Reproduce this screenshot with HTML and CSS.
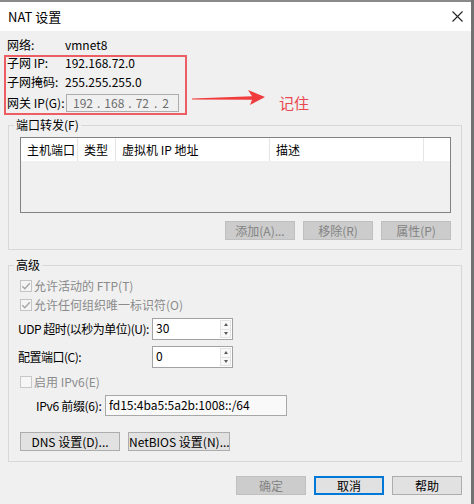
FILE: index.html
```html
<!DOCTYPE html>
<html lang="zh-CN">
<head>
<meta charset="utf-8">
<title>NAT 设置</title>
<link rel="stylesheet" href="styles.css">
</head>
<body>
<div class="window">
  <div class="titlebar">
    <span class="title">NAT 设置</span>
    <svg class="close" viewBox="0 0 11 11" width="11" height="11"><path d="M0.5 0.5 L10.5 10.5 M10.5 0.5 L0.5 10.5" stroke="#222" stroke-width="1.1" fill="none"/></svg>
  </div>

  <div class="content">
    <div class="info">
      <span>网络:</span><span>vmnet8</span>
      <span>子网 IP:</span><span>192.168.72.0</span>
      <span>子网掩码:</span><span>255.255.255.0</span>
      <span>网关 IP(G):</span>
      <div class="ipbox">
        <span>192</span><span class="dot">.</span><span>168</span><span class="dot">.</span><span>72</span><span class="dot wide">.</span><span class="last">2</span>
      </div>
    </div>

    <fieldset class="group">
      <legend>端口转发(F)</legend>
      <div class="ports">
        <div class="list">
          <div class="list-head">
            <span>主机端口</span><span>类型</span><span>虚拟机 IP 地址</span><span>描述</span><span class="blank"></span>
          </div>
        </div>
        <div class="btn-row">
          <span class="btn disabled">添加(A)...</span>
          <span class="btn disabled">移除(R)</span>
          <span class="btn disabled">属性(P)</span>
        </div>
      </div>
    </fieldset>

    <fieldset class="group adv-group">
      <legend>高级</legend>
      <div class="adv">
        <div class="check">
          <svg class="box" viewBox="0 0 12 12" width="12" height="12"><rect x="0.5" y="0.5" width="11" height="11" fill="#f4f4f4" stroke="#c4c4c4"/><path d="M2.3 6.2 L4.8 8.7 L9.8 3.2" fill="none" stroke="#a4a4a4" stroke-width="1.3"/></svg>
          <span>允许活动的 FTP(T)</span>
        </div>
        <div class="check">
          <svg class="box" viewBox="0 0 12 12" width="12" height="12"><rect x="0.5" y="0.5" width="11" height="11" fill="#f4f4f4" stroke="#c4c4c4"/><path d="M2.3 6.2 L4.8 8.7 L9.8 3.2" fill="none" stroke="#a4a4a4" stroke-width="1.3"/></svg>
          <span>允许任何组织唯一标识符(O)</span>
        </div>
        <div class="spin-row">
          <span class="spin-label">UDP 超时(以秒为单位)(U):</span>
          <div class="spin"><span class="spin-val">30</span><span class="spin-btns"><span class="up"></span><span class="down"></span></span></div>
        </div>
        <div class="spin-row second">
          <span class="spin-label">配置端口(C):</span>
          <div class="spin"><span class="spin-val">0</span><span class="spin-btns"><span class="up"></span><span class="down"></span></span></div>
        </div>
        <div class="check ipv6">
          <svg class="box" viewBox="0 0 12 12" width="12" height="12"><rect x="0.5" y="0.5" width="11" height="11" fill="#f6f6f6" stroke="#c8c8c8"/></svg>
          <span>启用 IPv6(E)</span>
        </div>
        <div class="prefix-row">
          <span class="prefix-label">IPv6 前缀(6):</span>
          <div class="prefix">fd15:4ba5:5a2b:1008::/64</div>
        </div>
        <div class="adv-btns">
          <span class="btn dns">DNS 设置(D)...</span>
          <span class="btn netbios">NetBIOS 设置(N)...</span>
        </div>
      </div>
    </fieldset>

    <div class="footer">
      <span class="btn disabled">确定</span>
      <span class="btn primary">取消</span>
      <span class="btn">帮助</span>
    </div>
  </div>

  <!-- red callout drawn over the address rows -->
  <div class="callout"></div>
  <svg class="arrow" viewBox="0 0 78 20" width="78" height="20"><polygon points="2,10.6 62,8.2 58,2 75,9 60,17 62,11.8 2,11.6" fill="#f03c3c"/></svg>
  <span class="callout-text">记住</span>
</div>
</body>
</html>
```

FILE: styles.css
```css
* { box-sizing: border-box; }

html, body {
  margin: 0;
  padding: 0;
}

body {
  width: 474px;
  height: 504px;
  overflow: hidden;
  background: #727272;
  font-family: "Noto Sans CJK SC", sans-serif;
  font-size: 12px;
  color: #000;
}

.window {
  position: relative;
  width: 471px;
  height: 504px;
  background: #f0f0f0;
  border-top: 2px solid #8a8a8a;
}

/* title bar */
.titlebar {
  height: 29px;
  background: #fff;
  display: flex;
  align-items: center;
  justify-content: space-between;
  padding: 0 8px 0 8px;
}

.title {
  font-size: 13px;
  line-height: 16px;
}

.close { display: block; }

.content {
  padding-top: 5px;
}

/* network summary */
.info {
  display: grid;
  grid-template-columns: 58px auto;
  grid-template-rows: 18px 18px 19px 24px;
  align-items: center;
  justify-items: start;
  padding-left: 7px;
  line-height: 16px;
  white-space: nowrap;
}

.ipbox {
  margin-left: 1px;
  width: 113px;
  height: 18px;
  border: 1px solid #adadad;
  background: #f0f0f0;
  color: #6d6d6d;
  display: flex;
  align-items: center;
  gap: 4px;
  padding-left: 6px;
  line-height: 16px;
  overflow: hidden;
}

.ipbox .dot.wide { margin-left: 1px; margin-right: 1px; }

/* group boxes */
.group {
  margin: 2px 0 0 8px;
  width: 454px;
  padding: 0;
  min-width: 0;
  border: 1px solid #d8d8d8;
}

.group legend {
  margin-left: 5px;
  padding: 0 2px;
  line-height: 16px;
}

.adv-group { margin-top: 7px; }

.ports {
  padding: 4px 10px 9px 11px;
}

.list {
  height: 76px;
  border: 1px solid #828282;
  background: #f0f0f0;
}

.list-head {
  display: grid;
  grid-template-columns: 57px 38px 154px 154px 1fr;
  height: 23px;
  background: #fff;
  line-height: 23px;
}

.list-head span {
  padding-left: 6px;
  border-right: 1px solid #e5e5e5;
  white-space: nowrap;
}

.list-head .blank { border-right: none; }

.btn-row {
  display: flex;
  justify-content: flex-end;
  gap: 8px;
  margin-top: 8px;
}

/* push buttons */
.btn {
  display: block;
  width: 70px;
  height: 19px;
  line-height: 17px;
  text-align: center;
  background: #e1e1e1;
  border: 1px solid #adadad;
  white-space: nowrap;
}

.btn.disabled {
  background: #cccccc;
  border-color: #bfbfbf;
  color: #838383;
}

.btn.primary {
  border: 2px solid #0078d7;
  line-height: 15px;
}

/* advanced options */
.adv {
  padding: 3px 10px 10px 11px;
}

.check {
  height: 19px;
  display: flex;
  align-items: center;
  gap: 2px;
  color: #8b8b8b;
  line-height: 16px;
  white-space: nowrap;
}

.box { display: block; flex: none; }

.spin-row {
  display: grid;
  grid-template-columns: 134px 81px;
  align-items: center;
  margin: 4px 0 0 -2px;
  line-height: 16px;
}

.spin-label {
  white-space: nowrap;
  letter-spacing: -0.5px;
}

.spin-row.second { margin-top: 6px; }

.spin {
  height: 22px;
  border: 1px solid #a2a2a2;
  background: #fff;
  display: flex;
  justify-content: space-between;
  padding-left: 3px;
}

.spin-val {
  line-height: 16px;
  padding-top: 1px;
}

.spin-btns {
  width: 11px;
  margin: 1px 1px 1px 0;
  display: flex;
  flex-direction: column;
}

.spin-btns span {
  flex: 1;
  border: 1px solid #e2e2e2;
  background: #f8f8f8;
  display: flex;
  align-items: center;
  justify-content: center;
}

.spin-btns .down { border-top: none; }

.spin-btns .up::before,
.spin-btns .down::before {
  content: "";
  border-left: 2.5px solid transparent;
  border-right: 2.5px solid transparent;
}

.spin-btns .up::before { border-bottom: 3px solid #5a5a5a; }
.spin-btns .down::before { border-top: 3px solid #5a5a5a; }

.check.ipv6 { margin-top: 4px; }

.prefix-row {
  display: grid;
  grid-template-columns: 69px 182px;
  align-items: center;
  margin: 4px 0 0 16px;
  line-height: 16px;
  white-space: nowrap;
}

.prefix-label { letter-spacing: -0.3px; }

.prefix {
  height: 21px;
  border: 1px solid #a8a8a8;
  background: #f9f9f9;
  padding: 1px 0 0 3px;
  line-height: 16px;
}

.adv-btns {
  display: flex;
  gap: 8px;
  margin-top: 16px;
}

.btn.dns { width: 100px; }
.btn.netbios { width: 102px; }

/* dialog buttons */
.footer {
  display: flex;
  justify-content: flex-end;
  gap: 8px;
  margin: 14px 9px 0 0;
}

/* annotation drawn on top of the dialog */
.callout {
  position: absolute;
  left: 4px;
  top: 53px;
  width: 183px;
  height: 60px;
  border: 2px solid #ec5e64;
}

.arrow {
  position: absolute;
  left: 190px;
  top: 86px;
  display: block;
}

.callout-text {
  position: absolute;
  left: 279px;
  top: 92px;
  font-size: 15px;
  line-height: 18px;
  color: #e9474d;
}
```
